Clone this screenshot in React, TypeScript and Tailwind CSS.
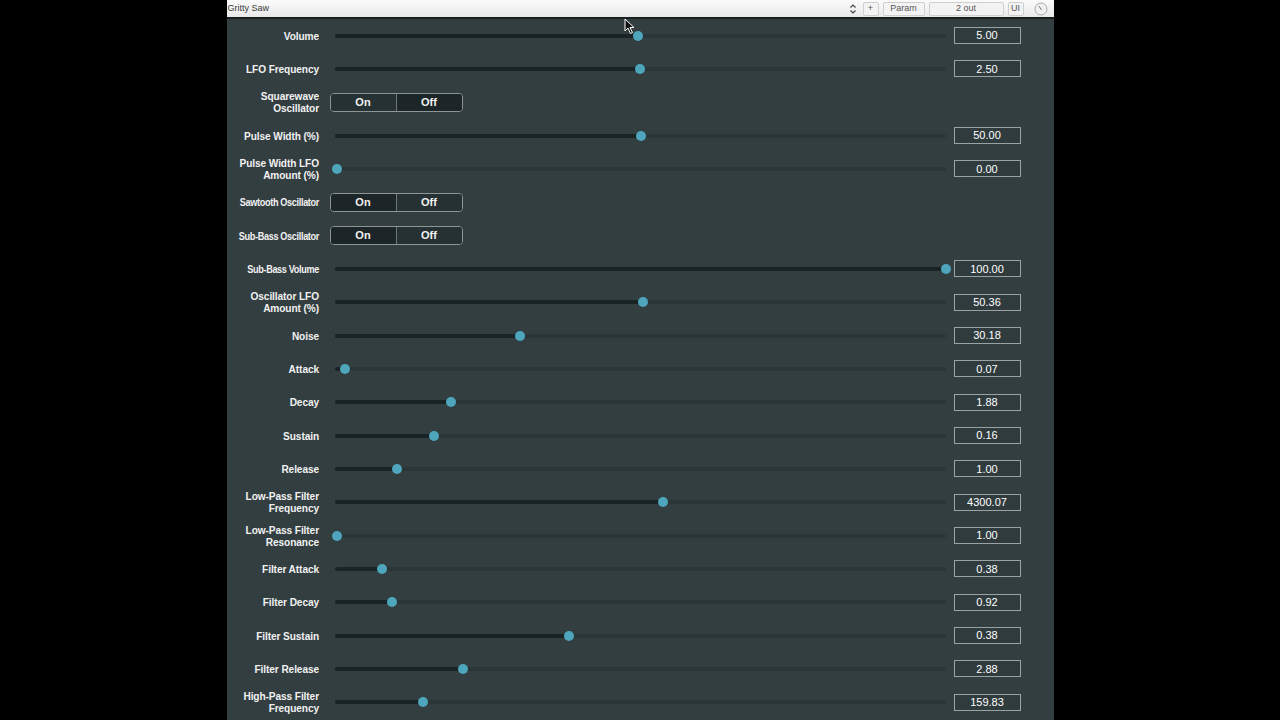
import React from 'react';

type Row =
  | { kind: 'slider'; label: string[]; x: number; value: string; tight?: boolean }
  | { kind: 'toggle'; label: string[]; on: boolean; tight?: boolean };

// thumb x is the pixel centre on the page; track runs 335..946
const rows: Row[] = [
  { kind: 'slider', label: ['Volume'], x: 638, value: '5.00' },
  { kind: 'slider', label: ['LFO Frequency'], x: 640, value: '2.50' },
  { kind: 'toggle', label: ['Squarewave', 'Oscillator'], on: false },
  { kind: 'slider', label: ['Pulse Width (%)'], x: 641, value: '50.00' },
  { kind: 'slider', label: ['Pulse Width LFO', 'Amount (%)'], x: 337, value: '0.00' },
  { kind: 'toggle', label: ['Sawtooth Oscillator'], on: true, tight: true },
  { kind: 'toggle', label: ['Sub-Bass Oscillator'], on: true, tight: true },
  { kind: 'slider', label: ['Sub-Bass Volume'], x: 946, value: '100.00', tight: true },
  { kind: 'slider', label: ['Oscillator LFO', 'Amount (%)'], x: 643, value: '50.36' },
  { kind: 'slider', label: ['Noise'], x: 520, value: '30.18' },
  { kind: 'slider', label: ['Attack'], x: 345, value: '0.07' },
  { kind: 'slider', label: ['Decay'], x: 451, value: '1.88' },
  { kind: 'slider', label: ['Sustain'], x: 434, value: '0.16' },
  { kind: 'slider', label: ['Release'], x: 397, value: '1.00' },
  { kind: 'slider', label: ['Low-Pass Filter', 'Frequency'], x: 663, value: '4300.07' },
  { kind: 'slider', label: ['Low-Pass Filter', 'Resonance'], x: 337, value: '1.00' },
  { kind: 'slider', label: ['Filter Attack'], x: 382, value: '0.38' },
  { kind: 'slider', label: ['Filter Decay'], x: 392, value: '0.92' },
  { kind: 'slider', label: ['Filter Sustain'], x: 569, value: '0.38' },
  { kind: 'slider', label: ['Filter Release'], x: 463, value: '2.88' },
  { kind: 'slider', label: ['High-Pass Filter', 'Frequency'], x: 423, value: '159.83' },
];

const TRACK_LEFT = 335;

function Slider({ x }: { x: number }) {
  const pos = x - TRACK_LEFT;
  return (
    <div className="relative ml-[5px] w-[611px] h-[4px] rounded-full bg-[#2b3639]">
      <div className="absolute left-0 top-0 h-[4px] rounded-full bg-[#1a2427]" style={{ width: pos }} />
      <div
        className="absolute top-[-3px] w-[10px] h-[10px] rounded-full bg-[#4ea6bc]"
        style={{ left: pos - 5 }}
      />
    </div>
  );
}

function Toggle({ on }: { on: boolean }) {
  return (
    <div className="flex w-[133px] h-[19px] rounded-[4px] border border-[#8d9596] bg-[#1f292c] overflow-hidden text-[11px] font-bold text-[#f2f2f2]">
      <div className={'flex-1 flex items-center justify-center ' + (on ? 'bg-[#1c2528]' : 'bg-[#263134]')}>On</div>
      <div className={'flex-1 flex items-center justify-center border-l border-[#6f7778] ' + (on ? 'bg-[#263134]' : 'bg-[#1c2528]')}>Off</div>
    </div>
  );
}

function TopBar() {
  const btn = 'h-[14px] flex items-center justify-center border border-[#cfcfcf] rounded-[2px] bg-[#f3f3f3] text-[9px] text-[#555]';
  return (
    <div className="h-[19px] shrink-0 flex items-center bg-gradient-to-b from-[#fbfbfb] to-[#e9e9e9] border-b-2 border-[#1b1f20]">
      <div className="flex-1 flex items-center justify-between h-[16px] pl-[1px] pr-[2px] text-[9px] text-[#3a3a3a]">
        <span>Gritty Saw</span>
        <svg width="8" height="12" viewBox="0 0 8 12" fill="none" stroke="#444" strokeWidth="1.2">
          <path d="M1.5 4.5 L4 2 L6.5 4.5" />
          <path d="M1.5 7.5 L4 10 L6.5 7.5" />
        </svg>
      </div>
      <div className="flex items-center gap-[4px] ml-[4px] mr-[6px]">
        <div className={btn + ' w-[16px]'}>+</div>
        <div className={btn + ' w-[42px]'}>Param</div>
        <div className={btn + ' w-[75px]'}>2 out</div>
        <div className={btn + ' w-[16px]'}>UI</div>
        <svg width="14" height="14" viewBox="0 0 14 14" className="ml-[6px]">
          <circle cx="7" cy="7" r="6" fill="#f0f0f0" stroke="#9a9a9a" strokeWidth="0.8" />
          <path d="M5 4 L7.5 8" stroke="#777" strokeWidth="1" />
        </svg>
      </div>
    </div>
  );
}

export default function App() {
  return (
    <div
      className="w-[1280px] h-[720px] bg-black flex justify-center overflow-hidden"
      style={{ fontFamily: '"Liberation Sans", Arial, sans-serif' }}
    >
      <div className="relative w-[827px] h-[720px] bg-[#333e41] flex flex-col">
        <TopBar />
        <div className="flex flex-col">
          {rows.map((r) => (
            <div key={r.label.join(' ')} className="h-[33.33px] flex items-center shrink-0">
              <div
                className={
                  'w-[86px] ml-[6px] flex flex-col items-end whitespace-nowrap font-bold text-[#f1f1f1] leading-[12px] origin-right ' +
                  (r.tight ? 'text-[10.5px] tracking-[-0.4px] scale-x-[0.87]' : 'text-[11px] tracking-[-0.1px] scale-x-[0.92]')
                }
              >
                {r.label.map((l) => (
                  <span key={l}>{l}</span>
                ))}
              </div>
              <div className="w-[624px] ml-[11px] flex items-center">
                {r.kind === 'slider' ? <Slider x={r.x} /> : <Toggle on={r.on} />}
              </div>
              {r.kind === 'slider' && (
                <div className="w-[67px] h-[17px] border border-[#9aa2a3] bg-[#303b3e] flex items-center justify-center text-[11px] text-white">
                  {r.value}
                </div>
              )}
            </div>
          ))}
        </div>
        {/* mouse pointer */}
        <svg
          className="absolute left-[397px] top-[18px]"
          width="12"
          height="17"
          viewBox="0 0 12 17"
        >
          <path d="M1 1 L1 13 L4 10 L6.5 15.5 L8.5 14.5 L6 9.5 L10 9.5 Z" fill="#111" stroke="#fff" strokeWidth="1" />
        </svg>
      </div>
    </div>
  );
}
